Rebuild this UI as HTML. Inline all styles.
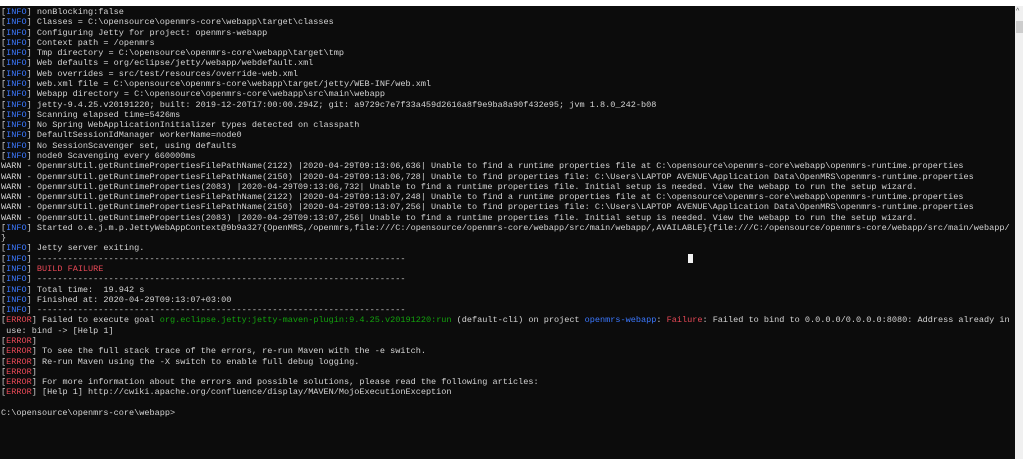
<!DOCTYPE html>
<html><head><meta charset="utf-8">
<style>
html,body{margin:0;padding:0;width:1023px;height:459px;overflow:hidden;background:#fff;}
#con{position:absolute;left:0;top:6px;width:1015px;height:453px;background:#0c0c0c;}
#sb{position:absolute;left:1015px;top:6px;width:8px;height:453px;background:#f0f0f0;}
#thumb{position:absolute;left:1016px;top:21px;width:7px;height:12px;background:#cdcdcd;}
#txt{position:absolute;left:1px;top:7px;font-family:"Liberation Mono",monospace;font-size:8.54px;line-height:10.28px;color:#d4d4d4;white-space:pre;}
.i{color:#3b78ff}.e{color:#e74856}.g{color:#13a10e}
#cur{position:absolute;left:688px;top:254px;width:5px;height:9px;background:#f2f2f2;}
</style></head><body>
<div id="con"></div><div id="sb"></div><div id="thumb"></div>
<div style="position:absolute;left:1016px;top:8px;font:7px 'Liberation Sans',sans-serif;color:#555">^</div>
<div id="txt">[<span class="i">INFO</span>] nonBlocking:false
[<span class="i">INFO</span>] Classes = C:\opensource\openmrs-core\webapp\target\classes
[<span class="i">INFO</span>] Configuring Jetty for project: openmrs-webapp
[<span class="i">INFO</span>] Context path = /openmrs
[<span class="i">INFO</span>] Tmp directory = C:\opensource\openmrs-core\webapp\target\tmp
[<span class="i">INFO</span>] Web defaults = org/eclipse/jetty/webapp/webdefault.xml
[<span class="i">INFO</span>] Web overrides = src/test/resources/override-web.xml
[<span class="i">INFO</span>] web.xml file = C:\opensource\openmrs-core\webapp\target/jetty/WEB-INF/web.xml
[<span class="i">INFO</span>] Webapp directory = C:\opensource\openmrs-core\webapp\src\main\webapp
[<span class="i">INFO</span>] jetty-9.4.25.v20191220; built: 2019-12-20T17:00:00.294Z; git: a9729c7e7f33a459d2616a8f9e9ba8a90f432e95; jvm 1.8.0_242-b08
[<span class="i">INFO</span>] Scanning elapsed time=5426ms
[<span class="i">INFO</span>] No Spring WebApplicationInitializer types detected on classpath
[<span class="i">INFO</span>] DefaultSessionIdManager workerName=node0
[<span class="i">INFO</span>] No SessionScavenger set, using defaults
[<span class="i">INFO</span>] node0 Scavenging every 660000ms
WARN - OpenmrsUtil.getRuntimePropertiesFilePathName(2122) |2020-04-29T09:13:06,636| Unable to find a runtime properties file at C:\opensource\openmrs-core\webapp\openmrs-runtime.properties
WARN - OpenmrsUtil.getRuntimePropertiesFilePathName(2150) |2020-04-29T09:13:06,728| Unable to find properties file: C:\Users\LAPTOP AVENUE\Application Data\OpenMRS\openmrs-runtime.properties
WARN - OpenmrsUtil.getRuntimeProperties(2083) |2020-04-29T09:13:06,732| Unable to find a runtime properties file. Initial setup is needed. View the webapp to run the setup wizard.
WARN - OpenmrsUtil.getRuntimePropertiesFilePathName(2122) |2020-04-29T09:13:07,248| Unable to find a runtime properties file at C:\opensource\openmrs-core\webapp\openmrs-runtime.properties
WARN - OpenmrsUtil.getRuntimePropertiesFilePathName(2150) |2020-04-29T09:13:07,256| Unable to find properties file: C:\Users\LAPTOP AVENUE\Application Data\OpenMRS\openmrs-runtime.properties
WARN - OpenmrsUtil.getRuntimeProperties(2083) |2020-04-29T09:13:07,256| Unable to find a runtime properties file. Initial setup is needed. View the webapp to run the setup wizard.
[<span class="i">INFO</span>] Started o.e.j.m.p.JettyWebAppContext@9b9a327{OpenMRS,/openmrs,file:///C:/opensource/openmrs-core/webapp/src/main/webapp/,AVAILABLE}{file:///C:/opensource/openmrs-core/webapp/src/main/webapp/
}
[<span class="i">INFO</span>] Jetty server exiting.
[<span class="i">INFO</span>] ------------------------------------------------------------------------
[<span class="i">INFO</span>] <span class="e">BUILD FAILURE</span>
[<span class="i">INFO</span>] ------------------------------------------------------------------------
[<span class="i">INFO</span>] Total time:  19.942 s
[<span class="i">INFO</span>] Finished at: 2020-04-29T09:13:07+03:00
[<span class="i">INFO</span>] ------------------------------------------------------------------------
[<span class="e">ERROR</span>] Failed to execute goal <span class="g">org.eclipse.jetty:jetty-maven-plugin:9.4.25.v20191220:run</span> (default-cli) on project <span class="i">openmrs-webapp</span>: <span class="e">Failure</span>: Failed to bind to 0.0.0.0/0.0.0.0:8080: Address already in
 use: bind -&gt; [Help 1]
[<span class="e">ERROR</span>]
[<span class="e">ERROR</span>] To see the full stack trace of the errors, re-run Maven with the -e switch.
[<span class="e">ERROR</span>] Re-run Maven using the -X switch to enable full debug logging.
[<span class="e">ERROR</span>]
[<span class="e">ERROR</span>] For more information about the errors and possible solutions, please read the following articles:
[<span class="e">ERROR</span>] [Help 1] http://cwiki.apache.org/confluence/display/MAVEN/MojoExecutionException

C:\opensource\openmrs-core\webapp&gt;</div>
<div id="cur"></div>
</body></html>
